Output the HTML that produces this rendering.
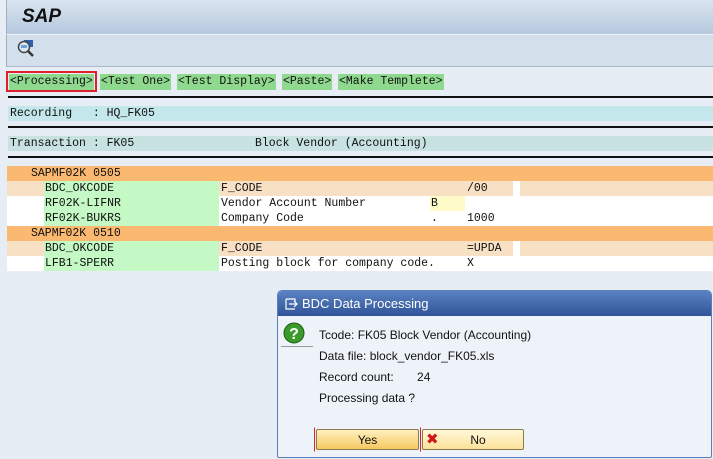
<!DOCTYPE html>
<html><head><style>
*{margin:0;padding:0;box-sizing:border-box}
body{width:713px;height:459px;overflow:hidden;background:#e6edf5;position:relative;font-family:"Liberation Mono",monospace;font-size:11.5px;color:#111}
.a{position:absolute;white-space:pre}
.hdr{left:6px;top:0;width:707px;height:34px;background:linear-gradient(#d9e4ef,#b5c9de);border-left:1px solid #9fb0c2}
.tb{left:6px;top:34px;width:707px;height:33px;background:#d3dfea;border-left:1px solid #9fb0c2;border-top:1px solid #eef3f8;border-bottom:1px solid #a9b8c8}
.sap{left:22px;top:6px;font:italic bold 19px "Liberation Sans",sans-serif;color:#111}
.btn{top:74px;height:16px;line-height:16px;background:#8fd98f;padding:0 1px}
.ln{left:8px;width:705px;height:2px;background:#111}
.row{height:15px;line-height:15px}
.g{left:44px;width:175px;background:#c4f8c4;padding-left:1px}
.dlg{left:277px;top:290px;width:435px;height:168px;background:#eef3f9;border:1px solid #5a7fb8;border-radius:5px 5px 2px 2px;overflow:hidden;font-family:"Liberation Sans",sans-serif;font-size:12px}
.tt{left:0;top:0;width:100%;height:25px;background:linear-gradient(#5b82c2,#2f5498);color:#fff;font-size:13px;line-height:25px;padding-left:24px}
.b{top:138px;height:21px;line-height:20px;text-align:center;font-size:12px;border:1px solid #8a7a50;border-radius:2px;background:linear-gradient(#fff0c0,#f6c860)}
</style></head><body>
<div class="a hdr"></div>
<div class="a sap">SAP</div>
<div class="a tb"></div>
<svg class="a" style="left:17px;top:39px" width="18" height="18" viewBox="0 0 18 18"><rect x="7" y="1" width="9" height="7" fill="#2f5fb0"/><circle cx="7" cy="8" r="5.5" fill="#dbe9f7" stroke="#444" stroke-width="1.5"/><rect x="4" y="6" width="6" height="3" fill="#6ea2dd"/><path d="M11 12l5 5" stroke="#333" stroke-width="2.5"/></svg>
<div class="a" style="left:6px;top:71px;width:91px;height:21px;border:2px solid #e0202a"></div>
<div class="a btn" style="left:9px">&lt;Processing&gt;</div>
<div class="a btn" style="left:100px">&lt;Test One&gt;</div>
<div class="a btn" style="left:177px">&lt;Test Display&gt;</div>
<div class="a btn" style="left:282px">&lt;Paste&gt;</div>
<div class="a btn" style="left:338px">&lt;Make Templete&gt;</div>
<div class="a ln" style="top:96px"></div>
<div class="a row" style="left:8px;top:106px;width:705px;background:#c3e7ea;padding-left:2px">Recording   : HQ_FK05</div>
<div class="a ln" style="top:126px"></div>
<div class="a row" style="left:8px;top:136px;width:705px;background:#c8e1e1;padding-left:2px">Transaction : FK05</div>
<div class="a row" style="left:255px;top:136px">Block Vendor (Accounting)</div>
<div class="a ln" style="top:156px"></div>

<div class="a row" style="left:7px;top:166px;width:706px;background:#fbb870;padding-left:24px">SAPMF02K 0505</div>
<div class="a row" style="left:7px;top:181px;width:706px;background:#f7e0c4"></div>
<div class="a row" style="left:513px;top:181px;width:7px;background:#fff"></div>
<div class="a row" style="left:7px;top:196px;width:706px;background:#fff"></div>
<div class="a row" style="left:7px;top:211px;width:706px;background:#fff"></div>
<div class="a row" style="left:7px;top:226px;width:706px;background:#fbb870;padding-left:24px">SAPMF02K 0510</div>
<div class="a row" style="left:7px;top:241px;width:706px;background:#f7e0c4"></div>
<div class="a row" style="left:513px;top:241px;width:7px;background:#fff"></div>
<div class="a row" style="left:7px;top:256px;width:706px;background:#fff"></div>
<div class="a row" style="left:430px;top:196px;width:35px;background:#fffbc8"></div>
<div class="a row g" style="top:181px">BDC_OKCODE</div>
<div class="a row g" style="top:196px">RF02K-LIFNR</div>
<div class="a row g" style="top:211px">RF02K-BUKRS</div>
<div class="a row g" style="top:241px">BDC_OKCODE</div>
<div class="a row g" style="top:256px">LFB1-SPERR</div>
<div class="a row" style="left:221px;top:181px">F_CODE</div>
<div class="a row" style="left:221px;top:196px">Vendor Account Number</div>
<div class="a row" style="left:221px;top:211px">Company Code</div>
<div class="a row" style="left:221px;top:241px">F_CODE</div>
<div class="a row" style="left:221px;top:256px">Posting block for company code.</div>
<div class="a row" style="left:431px;top:196px">B</div>
<div class="a row" style="left:431px;top:211px">.</div>
<div class="a row" style="left:467px;top:181px">/00</div>
<div class="a row" style="left:467px;top:211px">1000</div>
<div class="a row" style="left:467px;top:241px">=UPDA</div>
<div class="a row" style="left:467px;top:256px">X</div>

<div class="a dlg">
<div class="a tt">BDC Data Processing</div>
<svg class="a" style="left:7px;top:7px" width="13" height="12" viewBox="0 0 13 12"><path d="M1 1h9v3M1 1v10h9M4 6h8M9 3l3 3-3 3" fill="none" stroke="#fff" stroke-width="1.2"/></svg>
<svg class="a" style="left:5px;top:31px" width="22" height="22" viewBox="0 0 22 22"><circle cx="11" cy="11" r="10" fill="#3a9a2a" stroke="#1d5a14"/><text x="11" y="17" text-anchor="middle" font-family="Liberation Sans" font-weight="bold" font-size="16" fill="#fff">?</text></svg>
<div class="a" style="left:3px;top:55px;width:32px;height:1px;background:#999"></div>
<div class="a" style="left:41px;top:37px">Tcode: FK05 Block Vendor (Accounting)</div>
<div class="a" style="left:41px;top:58px">Data file: block_vendor_FK05.xls</div>
<div class="a" style="left:41px;top:79px">Record count:       24</div>
<div class="a" style="left:41px;top:100px">Processing data ?</div>
<div class="a" style="left:36px;top:136px;width:107px;height:25px;border:1px solid #e02020;border-top-color:transparent;border-bottom-color:transparent"></div>
<div class="a b" style="left:38px;width:103px">Yes</div>
<div class="a b" style="left:144px;width:102px;padding-left:10px;background:linear-gradient(#fff8d8,#fbe29a)">No</div>
<div class="a" style="left:148px;top:139px;color:#d01818;font:bold 15px 'DejaVu Sans',sans-serif">✖</div>
</div>
</body></html>
